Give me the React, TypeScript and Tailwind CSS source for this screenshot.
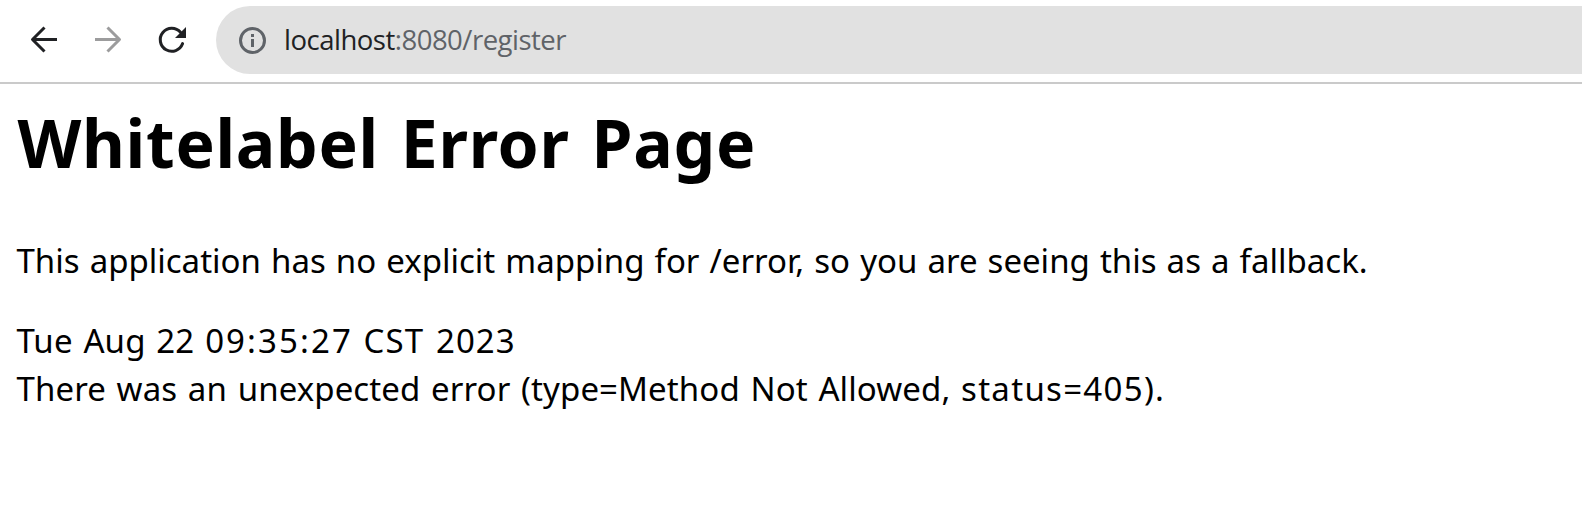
export default function App() {
  return (
    <div className="h-[526px] w-full overflow-hidden bg-white font-['Noto_Sans',sans-serif] text-black">
      <header className="flex h-[84px] items-start border-b-2 border-[#cacaca] bg-white pt-1.5">
        <nav className="flex h-[68px] w-[216px] shrink-0 items-center gap-8 pl-7">
          <svg className="size-8" viewBox="0 0 32 32" fill="none" stroke="#202124" strokeWidth="3">
            <path d="M29 15.5H5M16.5 3.5L4.5 15.5l12 12" strokeLinejoin="round" />
          </svg>
          <svg className="size-8" viewBox="0 0 32 32" fill="none" stroke="#9c9c9d" strokeWidth="3">
            <path d="M3 15.5h24M15.5 3.5l12 12-12 12" strokeLinejoin="round" />
          </svg>
          <svg className="size-8" viewBox="0 0 32 32" fill="none" stroke="#202124" strokeWidth="3">
            <path d="M26.6 19.6A11.5 11.5 0 1 1 24.5 8.3" strokeLinecap="round" />
            <path d="M30 3v11H19z" fill="#202124" stroke="none" />
          </svg>
        </nav>
        <div className="flex h-[68px] flex-1 items-center rounded-l-full bg-[#e1e1e1] pl-5">
          <svg className="size-8" viewBox="0 0 32 32" fill="none">
            <circle cx="16.5" cy="16.5" r="12" stroke="#5f6368" strokeWidth="3" />
            <path d="M15 10h3v3h-3zM15 15h3v8h-3z" fill="#5f6368" />
          </svg>
          <span className="ml-4 font-['Open_Sans',sans-serif] text-[27.5px] tracking-[-0.5px] text-[#5f6368]">
            <span className="text-[#202124]">localhost</span>:8080/register
          </span>
        </div>
      </header>
      <main className="px-[16.5px]">
        <h1 className="pt-2 pl-px text-[66px] leading-[100px] font-bold tracking-[0.7px] [word-spacing:4px]">
          Whitelabel Error Page
        </h1>
        <p className="mt-[45px] text-[33px] leading-[48px] [word-spacing:1.5px]">
          This application has no explicit mapping for /error, so you are seeing this as a fallback.
        </p>
        <div className="mt-8 text-[33px] leading-[48px] tracking-[0.15px] [word-spacing:2px]">
          Tue Aug 22 <span className="tracking-[2.1px]">09:35:27</span>{' '}
          <span className="tracking-[1.1px]">CST 2023</span>
        </div>
        <div className="text-[33px] leading-[48px] tracking-[0.1px] [word-spacing:2px]">
          There was an unexpected error (type=Method Not Allowed,{' '}
          <span className="tracking-[1.3px]">status=405).</span>
        </div>
      </main>
    </div>
  )
}
